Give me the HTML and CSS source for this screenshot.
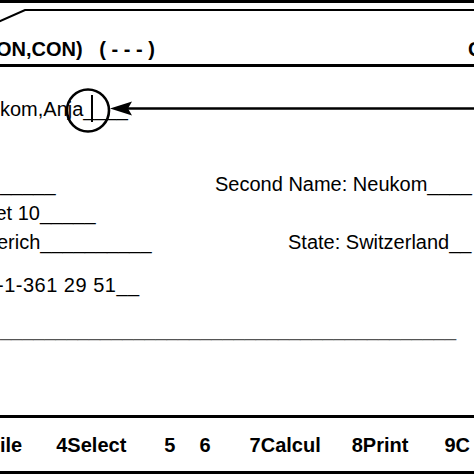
FILE: index.html
```html
<!DOCTYPE html>
<html>
<head>
<meta charset="utf-8">
<link rel="stylesheet" href="styles.css">
</head>
<body>
<div class="screen">
  <svg class="tabs" width="474" height="24" viewBox="0 0 474 24">
    <rect x="0" y="0" width="474" height="3" fill="#000"/>
    <polyline points="-2,22 25,10 476,10" fill="none" stroke="#000" stroke-width="2.2"/>
  </svg>
  <div class="title">
    <span class="title-text">ON,CON)   ( - - - )</span>
    <span class="title-right">C</span>
  </div>
  <div class="name-row"><span class="val">kom,Anja____</span><svg class="marker" width="474" height="60" viewBox="0 0 474 60">
      <circle cx="88" cy="32.5" r="21" fill="none" stroke="#000" stroke-width="2.6"/>
      <line x1="92" y1="17" x2="92" y2="44" stroke="#000" stroke-width="2"/>
      <line x1="125" y1="30.5" x2="476" y2="30.5" stroke="#000" stroke-width="2.5"/>
      <polygon points="110,30.5 132,23.5 128,30.5 132,37.5" fill="#000"/>
    </svg></div>
  <div class="fields">
    <div class="row">
      <span class="cell wa">_____</span>
      <span class="cell">Second Name: Neukom____</span>
    </div>
    <div class="row">
      <span class="cell cut4">et 10_____</span>
    </div>
    <div class="row">
      <span class="cell wc"><span class="cut3">erich__________</span></span>
      <span class="cell">State: Switzerland__</span>
    </div>
    <div class="row gap">
      <span class="cell cut3 phone">-1-361 29 51__</span>
    </div>
    <div class="row dotted">
      <span class="cell">_________________________________________</span>
    </div>
  </div>
  <div class="keys">
    <span class="key">ile</span>
    <span class="key m34">4Select</span>
    <span class="key m38">5</span>
    <span class="key m24">6</span>
    <span class="key m39">7Calcul</span>
    <span class="key m31">8Print</span>
    <span class="key m36">9C</span>
  </div>
</div>
</body>
</html>
```
FILE: styles.css
```css
html, body {
  margin: 0;
  padding: 0;
  background: #fff;
}
.screen {
  width: 474px;
  height: 474px;
  overflow: hidden;
  font-family: "Liberation Sans", Arial, sans-serif;
  color: #000;
  font-size: 20px;
  display: flex;
  flex-direction: column;
}
.tabs {
  display: block;
  flex: 0 0 24px;
}
.title {
  display: flex;
  justify-content: space-between;
  font-weight: bold;
  line-height: 23px;
  padding-top: 14px;
  padding-bottom: 3px;
  border-bottom: 3px solid #000;
  white-space: pre;
}
.title-text {
  margin-left: -4px;
}
.title-right {
  width: 6px;
  overflow: visible;
}
.name-row {
  position: relative;
  margin-top: 31px;
  line-height: 23px;
  height: 23px;
}
.val {
  white-space: pre;
}
.marker {
  position: absolute;
  left: 0;
  top: -20px;
}
.fields {
  margin-top: 48.6px;
}
.row {
  display: flex;
  line-height: 29px;
  height: 29px;
  white-space: pre;
}
.cell {
  flex: 0 0 auto;
}
.wa {
  flex: 0 0 215px;
}
.wc {
  flex: 0 0 288px;
}
.cut4 {
  margin-left: -4.5px;
}
.cut3 {
  margin-left: -3px;
}
.phone {
  letter-spacing: 0.5px;
}
.gap {
  margin-top: 14px;
}
.dotted {
  margin-top: 15px;
  color: #555;
}
.keys {
  margin-top: auto;
  display: flex;
  font-weight: bold;
  line-height: 51px;
  padding-top: 2px;
  border-top: 3px solid #000;
  border-bottom: 3px solid #000;
  white-space: pre;
}
.key {
  flex: 0 0 auto;
}
.m34 { margin-left: 34px; }
.m38 { margin-left: 38px; }
.m24 { margin-left: 24px; }
.m39 { margin-left: 39px; }
.m31 { margin-left: 31px; }
.m36 { margin-left: 36px; }
```
